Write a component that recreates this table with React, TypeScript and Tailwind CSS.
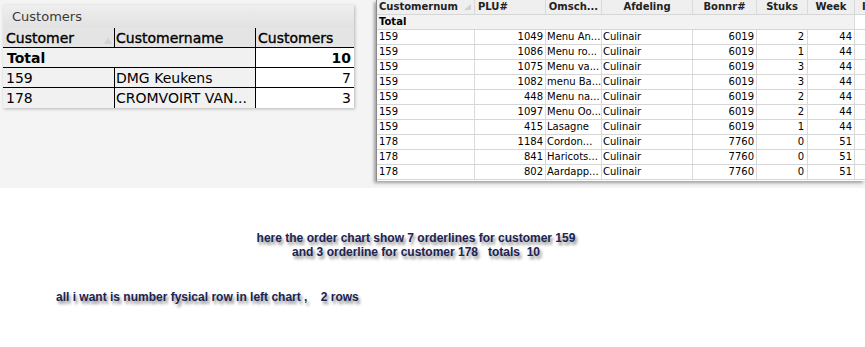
import React from "react";

const rows: string[][] = [
  ["159", "1049", "Menu An...", "Culinair", "6019", "2", "44"],
  ["159", "1086", "Menu ro...", "Culinair", "6019", "1", "44"],
  ["159", "1075", "Menu va...", "Culinair", "6019", "3", "44"],
  ["159", "1082", "menu Ba...", "Culinair", "6019", "3", "44"],
  ["159", "448", "Menu na...", "Culinair", "6019", "2", "44"],
  ["159", "1097", "Menu Oo...", "Culinair", "6019", "2", "44"],
  ["159", "415", "Lasagne", "Culinair", "6019", "1", "44"],
  ["178", "1184", "Cordon...", "Culinair", "7760", "0", "51"],
  ["178", "841", "Haricots...", "Culinair", "7760", "0", "51"],
  ["178", "802", "Aardapp...", "Culinair", "7760", "0", "51"],
];

function SortTri() {
  return (
    <svg width="7" height="6" viewBox="0 0 7 6" className="shrink-0">
      <polygon points="0,6 7,6 7,0" fill="#d0d0d0" />
    </svg>
  );
}

function LeftPanel() {
  const rowCls = "flex h-[20px] border-b border-black";
  return (
    <div className="ml-[3px] mt-[5px] w-[351px] h-[103px] bg-[#ececec] shadow-[1px_1px_3px_rgba(0,0,0,0.25)] font-['DejaVu_Sans',sans-serif] text-black">
      <div className="h-[23px] flex items-center pl-[9px] text-[13px] text-[#3a3a3a] bg-gradient-to-b from-[#eeeeee] to-[#e2e2e2]">
        Customers
      </div>
      <div className={rowCls + " bg-[#e4e4e4]"}>
        <div className="w-[112px] border-r border-black flex items-center justify-between pl-[3px] pr-[2px] text-[14px] leading-none [-webkit-text-stroke:0.35px_black]">
          <span>Customer</span>
          <svg width="8" height="7" viewBox="0 0 8 7" className="mt-[5px]">
            <polygon points="0,7 8,7 4,0" fill="#d4d4d4" />
          </svg>
        </div>
        <div className="w-[141px] border-r border-black flex items-center pl-[1px] text-[14px] leading-none [-webkit-text-stroke:0.35px_black]">
          Customername
        </div>
        <div className="flex-1 flex items-center pl-[2px] text-[14px] leading-none [-webkit-text-stroke:0.35px_black]">
          Customers
        </div>
      </div>
      <div className={rowCls + " bg-[#f1f1f1]"}>
        <div className="w-[253px] border-r border-black flex items-center pl-[4px] text-[14px] font-bold leading-none">
          Total
        </div>
        <div className="flex-1 bg-white flex items-center justify-end pr-[3px] text-[14px] font-bold leading-none">
          10
        </div>
      </div>
      <div className={rowCls + " bg-[#f1f1f1]"}>
        <div className="w-[112px] border-r border-black flex items-center pl-[3px] text-[14px] leading-none">159</div>
        <div className="w-[141px] border-r border-black flex items-center pl-[1px] text-[14px] leading-none">DMG Keukens</div>
        <div className="flex-1 bg-white flex items-center justify-end pr-[3px] text-[14px] leading-none">7</div>
      </div>
      <div className="flex h-[20px] bg-[#f1f1f1]">
        <div className="w-[112px] border-r border-black flex items-center pl-[3px] text-[14px] leading-none">178</div>
        <div className="w-[141px] border-r border-black flex items-center pl-[1px] text-[14px] leading-none">CROMVOIRT VAN...</div>
        <div className="flex-1 bg-white flex items-center justify-end pr-[3px] text-[14px] leading-none">3</div>
      </div>
    </div>
  );
}

const widths = ["w-[98px]", "w-[71px]", "w-[56px]", "w-[91px]", "w-[64px]", "w-[51px]", "w-[47px]", "w-[40px]"];
const aligns = ["justify-start pl-[2px]", "justify-end pr-[2px]", "justify-start pl-[1px]", "justify-start pl-[1px]", "justify-end pr-[2px]", "justify-end pr-[3px]", "justify-end pr-[2px]", "justify-start"];

function RightTable() {
  const headers = ["Customernum", "PLU#", "Omsch...", "Afdeling", "Bonnr#", "Stuks", "Week", "I"];
  return (
    <div className="ml-[22px] h-[181px] flex-1 overflow-hidden bg-white border-l border-[#8a8a8a] shadow-[-2px_2px_3px_rgba(0,0,0,0.35)] font-['DejaVu_Sans',sans-serif] text-[10px] text-black">
      <div className="flex h-[15px] bg-[#efefef] border-b border-[#d6d6d6]">
        {headers.map((h, i) => (
          <div
            key={i}
            className={
              widths[i] +
              " shrink-0 flex items-center font-bold text-[#222] leading-none " +
              (i < 7 ? "border-r border-[#dadada] " : "") +
              (i === 0
                ? "justify-between pl-[2px] pr-[3px]"
                : i === 1
                ? "justify-start pl-[3px]"
                : i === 7
                ? "justify-start pl-[7px]"
                : "justify-center")
            }
          >
            <span>{h}</span>
            {i === 0 && <SortTri />}
          </div>
        ))}
      </div>
      <div className="flex h-[15px] bg-[#f2f2f2] border-b border-[#d6d6d6]">
        <div className="w-[478px] shrink-0 border-r border-[#dadada] flex items-center pl-[2px] font-bold leading-none">
          Total
        </div>
        <div className="w-[40px] shrink-0 bg-white" />
      </div>
      {rows.map((r, ri) => (
        <div key={ri} className="flex h-[15px] border-b border-[#d6d6d6]">
          {r.map((c, ci) => (
            <div
              key={ci}
              className={widths[ci] + " shrink-0 flex items-center leading-none whitespace-nowrap overflow-hidden border-r border-[#dadada] " + aligns[ci]}
            >
              {c}
            </div>
          ))}
          <div className="w-[40px] shrink-0" />
        </div>
      ))}
    </div>
  );
}

export default function App() {
  const txt = "font-['Liberation_Sans',Arial,sans-serif] font-bold text-[12px] leading-[14px] text-[#1b2452] [text-shadow:2px_3px_3px_rgba(0,0,0,0.45)] whitespace-pre";
  return (
    <div className="w-[865px] h-[347px] bg-white overflow-hidden">
      <div className="h-[188px] bg-[#f4f4f4] flex items-start">
        <LeftPanel />
        <RightTable />
      </div>
      <div className="w-[832px] flex flex-col items-center pt-[43px]">
        <div className={txt}>here the order chart show 7 orderlines for customer 159</div>
        <div className={txt}>and 3 orderline for customer 178   totals  10</div>
      </div>
      <div className={"pl-[56px] mt-[31px] " + txt}>all i want is number fysical row in left chart ,    2 rows</div>
    </div>
  );
}
